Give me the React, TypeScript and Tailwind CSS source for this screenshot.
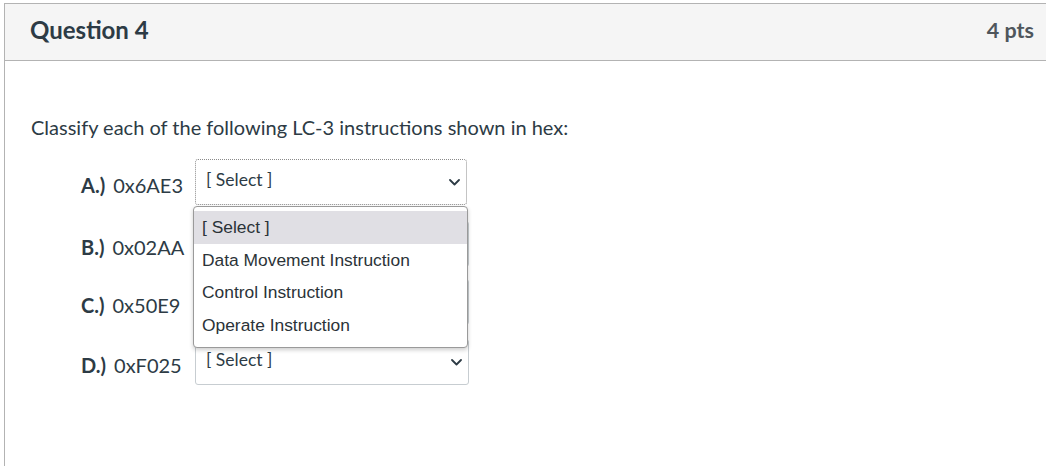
const OPTIONS = [
  '[ Select ]',
  'Data Movement Instruction',
  'Control Instruction',
  'Operate Instruction',
];

const ROWS = [
  { label: 'A.)', hex: '0x6AE3', mt: 'mt-[20px]', open: true },
  { label: 'B.)', hex: '0x02AA', mt: 'mt-[16px]', open: false },
  { label: 'C.)', hex: '0x50E9', mt: 'mt-[12px]', open: false },
  { label: 'D.)', hex: '0xF025', mt: 'mt-[14px]', open: false },
];

function Chevron() {
  return (
    <svg width="11" height="7" viewBox="0 0 11 7" fill="none" className="text-[#2d3b45]">
      <path d="M1 1l4.5 4.5L10 1" stroke="currentColor" strokeWidth="1.8" strokeLinecap="round" strokeLinejoin="round" />
    </svg>
  );
}

function SelectBox({ open }: { open: boolean }) {
  return (
    <div className="relative">
      <div
        className={
          open
            ? 'flex h-[46px] w-[272px] items-center justify-between rounded-[3px] border border-dotted border-[#8a8a8a] pr-[6px] pl-[10px]'
            : 'flex h-[46px] w-[274px] items-center justify-between rounded-[3px] border border-[#c7cdd1] pr-[6px] pl-[10px]'
        }
      >
        <span className="-mt-[3px] text-[17.5px] text-[#2d3b45]">[ Select ]</span>
        <Chevron />
      </div>
      {open && (
        <div className="absolute top-[47px] -left-[2px] z-10 w-[275px] rounded-[4px] border border-[#9a9a9a] bg-white pt-[4px] pb-[6px] font-['Liberation_Sans',Arial,sans-serif] text-[17.4px] text-[#2b3338] shadow-[0_2px_4px_rgba(0,0,0,0.2)]">
          {OPTIONS.map((opt, i) => (
            <div
              key={opt}
              className={
                i === 0
                  ? 'flex h-[32.5px] items-center bg-[#e0dfe4] pl-[8px]'
                  : 'flex h-[32.5px] items-center pl-[8px]'
              }
            >
              {opt}
            </div>
          ))}
        </div>
      )}
    </div>
  );
}

export default function App() {
  return (
    <div className="h-[466px] w-[1046px] overflow-hidden bg-white pt-[3px] pl-[4px] font-['Lato',sans-serif] text-[#2d3b45]">
      <div className="h-full border-t border-l border-[#b3b3b3]">
        <div className="flex h-[57px] items-center justify-between border-b border-[#b3b3b3] bg-[#f5f5f5] pr-[12px] pb-[4px] pl-[25px]">
          <h2 className="text-[24px] font-bold">Question 4</h2>
          <span className="text-[21.5px] font-bold text-[#4f565c]">4 pts</span>
        </div>
        <div className="pt-[54px] pl-[26px]">
          <p className="text-[20px] leading-[24px]">
            Classify each of the following LC-3 instructions shown in hex:
          </p>
          <div className="flex flex-col pl-[50px]">
            {ROWS.map((row) => (
              <div key={row.label} className={`flex items-center ${row.mt}`}>
                <div className="flex w-[114px] items-center gap-[8px] pt-[5px] text-[20px]">
                  <span className="font-bold">{row.label}</span>
                  <span>{row.hex}</span>
                </div>
                <SelectBox open={row.open} />
              </div>
            ))}
          </div>
        </div>
      </div>
    </div>
  );
}
